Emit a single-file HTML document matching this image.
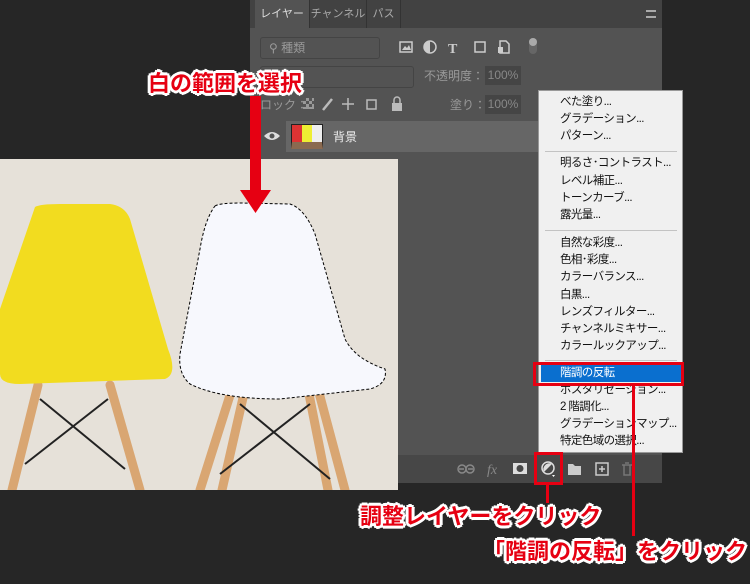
<!DOCTYPE html>
<html><head><meta charset="utf-8"><style>
*{margin:0;padding:0;box-sizing:border-box}
body{width:750px;height:584px;background:#262626;position:relative;overflow:hidden;font-family:"Liberation Sans","Noto Sans CJK JP",sans-serif}
.abs{position:absolute}
.panel{left:250px;top:0;width:412px;height:483px;background:#535353}
.tabs{left:250px;top:0;width:412px;height:28px;background:#424242}
.tab{top:0;height:28px;line-height:28px;font-size:11px;color:#aaa;text-align:center;white-space:nowrap}
.menu{left:538px;top:90px;width:145px;height:363px;background:#f0f0f0;border:1px solid #999}
.mi{position:absolute;left:21px;font-size:11.5px;letter-spacing:-0.6px;color:#111;line-height:17px;white-space:nowrap}
.sep{position:absolute;left:6px;width:132px;height:1px;background:#c3c3c3}
.ann{font-weight:bold;color:#e60012;font-size:22px;white-space:nowrap;
text-shadow:2px 0 #fff,-2px 0 #fff,0 2px #fff,0 -2px #fff,2px 2px #fff,-2px -2px #fff,2px -2px #fff,-2px 2px #fff,3px 0 #fff,-3px 0 #fff,0 3px #fff,0 -3px #fff}
.box{border:3px solid #e60012}
</style></head><body>
<div class="abs panel"></div>
<div class="abs tabs"></div>
<div class="abs tab" style="left:255px;width:54px;background:#535353;color:#ddd">レイヤー</div>
<div class="abs tab" style="left:309px;width:57px;border-left:1px solid #333">チャンネル</div>
<div class="abs tab" style="left:366px;width:35px;border-left:1px solid #333;border-right:1px solid #333">パス</div>
<div class="abs" style="left:646px;top:10px;width:10px;height:8px;border-top:2px solid #aaa;border-bottom:2px solid #aaa"></div>
<div class="abs" style="left:260px;top:37px;width:120px;height:22px;border:1px solid #444;border-radius:3px;color:#999;font-size:12px;line-height:20px;padding-left:8px;white-space:nowrap">⚲ 種類</div>
<svg class="abs" style="left:395px;top:38px" width="150" height="20">
<rect x="5" y="4" width="12" height="10" fill="none" stroke="#ccc" stroke-width="1.5"/><path d="M7 12l3-4 2 2 2-3 2 5z" fill="#ccc"/>
<circle cx="35" cy="9" r="6" fill="none" stroke="#ccc" stroke-width="1.5"/><path d="M35 3a6 6 0 0 0 0 12z" fill="#ccc"/>
<text x="53" y="15" font-family="Liberation Serif" font-weight="bold" font-size="14" fill="#ccc">T</text>
<rect x="80" y="4" width="10" height="10" fill="none" stroke="#ccc" stroke-width="1.5"/>
<path d="M105 3h6l3 3v9h-9z" fill="none" stroke="#ccc" stroke-width="1.5"/><rect x="103" y="9" width="5" height="6" fill="#ccc"/>
<rect x="134" y="0" width="8" height="16" rx="4" fill="#666"/><circle cx="138" cy="4" r="4" fill="#aaa"/>
</svg>
<div class="abs" style="left:260px;top:66px;width:154px;height:22px;border:1px solid #444;border-radius:3px"></div>
<div class="abs" style="left:424px;top:67px;font-size:12px;color:#999">不透明度：</div>
<div class="abs" style="left:485px;top:66px;width:36px;height:19px;background:#454545;color:#888;font-size:12px;line-height:19px;text-align:center">100%</div>
<div class="abs" style="left:260px;top:96px;font-size:12px;color:#999;white-space:nowrap">ロック：</div>
<svg class="abs" style="left:303px;top:96px" width="110" height="16">
<rect x="0" y="2" width="11" height="11" fill="#999"/><path d="M0 2h3v3H0zM6 2h3v3H6zM3 5h3v3H3zM9 5h2v3H9zM0 8h3v3H0zM6 8h3v3H6z" fill="#555"/>
<path d="M20 14l9-11" stroke="#bbb" stroke-width="2.5"/>
<path d="M45 2v12M39 8h12" stroke="#bbb" stroke-width="1.5"/>
<rect x="64" y="4" width="9" height="9" fill="none" stroke="#bbb" stroke-width="1.5"/>
<rect x="89" y="7" width="10" height="8" fill="#bbb"/><path d="M91 7V4a3 3 0 0 1 6 0v3" fill="none" stroke="#bbb" stroke-width="1.5"/>
</svg>
<div class="abs" style="left:450px;top:96px;font-size:12px;color:#999">塗り：</div>
<div class="abs" style="left:485px;top:95px;width:36px;height:19px;background:#454545;color:#888;font-size:12px;line-height:19px;text-align:center">100%</div>
<div class="abs" style="left:286px;top:121px;width:376px;height:31px;background:#666"></div>
<svg class="abs" style="left:263px;top:130px" width="18" height="12"><path d="M1 6Q9 -2 17 6Q9 14 1 6z" fill="#ddd"/><circle cx="9" cy="6" r="2.5" fill="#535353"/></svg>
<div class="abs" style="left:291px;top:124px;width:32px;height:25px;background:linear-gradient(90deg,#d33 0 33%,#ee3 33% 66%,#eee 66%);border:1px solid #222;border-bottom:7px solid #8a6a50"></div>
<div class="abs" style="left:333px;top:128px;color:#eee;font-size:12px">背景</div>
<div class="abs" style="left:250px;top:455px;width:412px;height:28px;background:#474747"></div>
<svg class="abs" style="left:455px;top:458px" width="185" height="22">
<path d="M4 11h5M13 11h5" stroke="#888" stroke-width="1.5"/><rect x="3" y="7" width="8" height="8" rx="4" fill="none" stroke="#888" stroke-width="1.5"/><rect x="11" y="7" width="8" height="8" rx="4" fill="none" stroke="#888" stroke-width="1.5"/>
<text x="32" y="16" font-family="Liberation Serif" font-style="italic" font-size="14" fill="#888">fx</text>
<rect x="58" y="5" width="14" height="11" fill="#ddd"/><circle cx="65" cy="10.5" r="3.5" fill="#474747"/>
<circle cx="93" cy="10" r="6" fill="none" stroke="#ddd" stroke-width="1.5"/><path d="M89 14a6 6 0 0 1 8-8z" fill="#ddd"/><path d="M97 17h3l-1.5 2z" fill="#fff"/>
<path d="M113 6h5l2 2h6v9h-13z" fill="#ccc"/>
<rect x="141" y="5" width="12" height="12" fill="none" stroke="#ccc" stroke-width="1.5"/><path d="M147 8v6M144 11h6" stroke="#ccc" stroke-width="1.5"/>
<path d="M167 7h10M169 7v10h6V7M170 5h4" fill="none" stroke="#777" stroke-width="1.5"/>
</svg>
<svg class="abs" style="left:0;top:159px" width="398" height="331">
<rect width="398" height="331" fill="#e6e1d9"/>
<g stroke="#d9a672" stroke-width="9" stroke-linecap="round">
<line x1="38" y1="226" x2="12" y2="331"/><line x1="110" y1="226" x2="140" y2="331"/>
<line x1="232" y1="230" x2="200" y2="331"/><line x1="245" y1="230" x2="222" y2="331"/>
<line x1="308" y1="230" x2="328" y2="331"/><line x1="318" y1="230" x2="345" y2="331"/></g>
<g stroke="#222" stroke-width="2"><line x1="40" y1="240" x2="125" y2="310"/><line x1="108" y1="240" x2="25" y2="305"/>
<line x1="240" y1="245" x2="330" y2="320"/><line x1="310" y1="245" x2="220" y2="315"/></g>
<path d="M35 48 Q40 45 60 45 L110 45 Q125 47 130 60 L168 190 Q178 215 165 220 L20 225 Q0 225 0 215 L0 150 Z" fill="#f2dc1f"/>
<path d="M215 47 Q220 44 240 44 L290 45 Q305 50 315 75 L345 180 Q355 200 385 210 Q388 225 370 230 L280 240 Q220 240 190 225 Q178 215 180 195 L200 90 Q205 60 215 47 Z" fill="#f7f8fd" stroke="#000" stroke-dasharray="3 2" stroke-width="1"/>
</svg>
<div class="abs menu">
<div class="mi" style="top:3px">べた塗り...</div>
<div class="mi" style="top:20px">グラデーション...</div>
<div class="mi" style="top:37px">パターン...</div>
<div class="sep" style="top:60px"></div>
<div class="mi" style="top:64px">明るさ･コントラスト...</div>
<div class="mi" style="top:82px">レベル補正...</div>
<div class="mi" style="top:99px">トーンカーブ...</div>
<div class="mi" style="top:116px">露光量...</div>
<div class="sep" style="top:139px"></div>
<div class="mi" style="top:144px">自然な彩度...</div>
<div class="mi" style="top:161px">色相･彩度...</div>
<div class="mi" style="top:178px">カラーバランス...</div>
<div class="mi" style="top:196px">白黒...</div>
<div class="mi" style="top:213px">レンズフィルター...</div>
<div class="mi" style="top:230px">チャンネルミキサー...</div>
<div class="mi" style="top:247px">カラールックアップ...</div>
<div class="sep" style="top:269px"></div>
<div style="position:absolute;left:2px;top:274px;width:140px;height:17px;background:#0a6fcf"></div>
<div class="mi" style="top:274px;color:#fff">階調の反転</div>
<div class="mi" style="top:291px">ポスタリゼーション...</div>
<div class="mi" style="top:308px">2 階調化...</div>
<div class="mi" style="top:325px">グラデーションマップ...</div>
<div class="mi" style="top:342px">特定色域の選択...</div>
</div>
<div class="abs box" style="left:533px;top:362px;width:151px;height:24px"></div>
<div class="abs" style="left:632px;top:386px;width:3px;height:150px;background:#e60012"></div>
<div class="abs box" style="left:534px;top:452px;width:29px;height:33px"></div>
<div class="abs" style="left:546px;top:485px;width:3px;height:18px;background:#e60012"></div>
<div class="abs" style="left:250px;top:96px;width:11px;height:100px;background:#e60012"></div>
<svg class="abs" style="left:240px;top:190px" width="32" height="24"><polygon points="0,0 31,0 15.5,23" fill="#e60012"/></svg>
<div class="abs ann" style="left:148px;top:66px">白の範囲を選択</div>
<div class="abs ann" style="left:360px;top:499px">調整レイヤーをクリック</div>
<div class="abs ann" style="left:483px;top:534px">「階調の反転」をクリック</div>
</body></html>
